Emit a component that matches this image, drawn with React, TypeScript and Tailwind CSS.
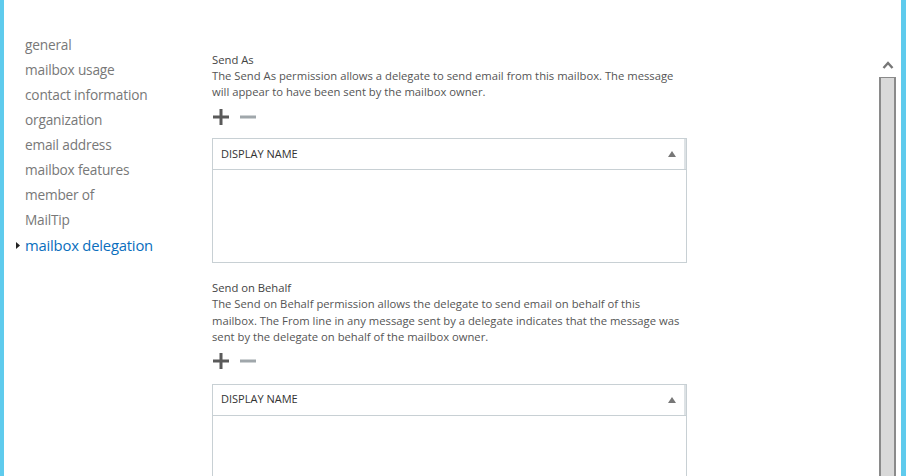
import React from "react";

const navItems = [
  "general",
  "mailbox usage",
  "contact information",
  "organization",
  "email address",
  "mailbox features",
  "member of",
  "MailTip",
  "mailbox delegation",
];

function PlusMinus() {
  return (
    <div className="flex items-center gap-[11px] h-[16px] pl-[1px]">
      <svg width="16" height="16" viewBox="0 0 16 16">
        <rect x="0" y="6.5" width="16" height="3" fill="#5a5a5a" />
        <rect x="6.5" y="0" width="3" height="16" fill="#5a5a5a" />
      </svg>
      <svg width="16" height="16" viewBox="0 0 16 16">
        <rect x="0" y="6.5" width="16" height="3" fill="#a0a7ab" />
      </svg>
    </div>
  );
}

function Table({ bodyHeight }: { bodyHeight: string }) {
  return (
    <div className="w-[475px] border border-[#c8d0d4]">
      <div className="relative flex items-center h-[31px] border-b border-[#c8d0d4] pl-[8px] pr-[10px]">
        <span className="text-[11px] text-[#333]">DISPLAY NAME</span>
        <svg className="ml-auto" width="8" height="6" viewBox="0 0 8 6">
          <polygon points="4,0 8,6 0,6" fill="#777" />
        </svg>
        <div className="absolute right-0 top-0 h-full w-[2px] bg-[#dde2e5]" />
      </div>
      <div className={bodyHeight} />
    </div>
  );
}

export default function App() {
  return (
    <div
      className="relative w-[906px] h-[476px] overflow-hidden bg-white flex"
      style={{ fontFamily: '"Open Sans", "Noto Sans", sans-serif' }}
    >
      <div className="w-[4px] h-full bg-[#5fcbed] shrink-0" />
      <nav className="w-[208px] shrink-0 pt-[33px] pl-[12px]">
        {navItems.map((item) => {
          const active = item === "mailbox delegation";
          return (
            <div key={item} className="flex items-center h-[25px]">
              <div className="w-[9px] flex items-center">
                {active && (
                  <svg width="4" height="7" viewBox="0 0 4 7">
                    <polygon points="0,0 4,3.5 0,7" fill="#222" />
                  </svg>
                )}
              </div>
              <span
                className={
                  active
                    ? "text-[14.8px] tracking-[-0.2px] text-[#0a6ebd]"
                    : "text-[13.7px] tracking-[-0.2px] text-[#787878]"
                }
              >
                {item}
              </span>
            </div>
          );
        })}
      </nav>
      <main className="flex-1 pt-[52px] text-[#444]">
        <div className="text-[11.25px] leading-[16px]">Send As</div>
        <div className="text-[11.25px] leading-[16px] text-[#555]">
          <div>The Send As permission allows a delegate to send email from this mailbox. The message</div>
          <div>will appear to have been sent by the mailbox owner.</div>
        </div>
        <div className="mt-[9px]">
          <PlusMinus />
        </div>
        <div className="mt-[13px]">
          <Table bodyHeight="h-[92px]" />
        </div>
        <div className="mt-[17px] text-[11.25px] leading-[16px]">Send on Behalf</div>
        <div className="text-[11.25px] leading-[16.5px] text-[#555]">
          <div>The Send on Behalf permission allows the delegate to send email on behalf of this</div>
          <div>mailbox. The From line in any message sent by a delegate indicates that the message was</div>
          <div>sent by the delegate on behalf of the mailbox owner.</div>
        </div>
        <div className="mt-[7px]">
          <PlusMinus />
        </div>
        <div className="mt-[15px]">
          <Table bodyHeight="h-[120px]" />
        </div>
      </main>
      <div className="w-[17px] shrink-0 flex flex-col items-center pt-[61px] mr-[5px]">
        <svg width="12" height="8" viewBox="0 0 12 8" className="mb-[8px]">
          <polyline points="1.5,7 6,2 10.5,7" fill="none" stroke="#777" strokeWidth="2.4" />
        </svg>
        <div className="w-[17px] flex-1 bg-[#d9d9d9] border-x-2 border-t border-[#8a8a8a]" />
      </div>
      <div className="w-[5px] h-full bg-[#5fcbed] shrink-0" />
    </div>
  );
}
